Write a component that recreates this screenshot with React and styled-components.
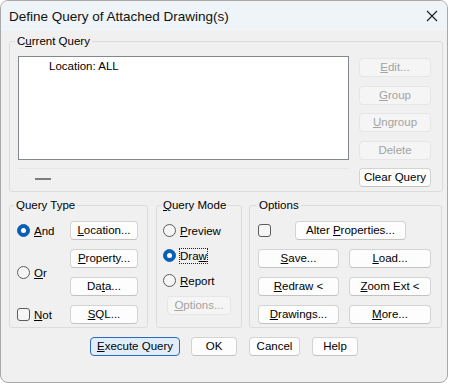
import React from 'react';
import styled, { createGlobalStyle } from 'styled-components';

const GlobalStyle = createGlobalStyle`
  html, body {
    margin: 0;
    padding: 0;
    background: #ffffff;
  }
  body {
    font-family: "Liberation Sans", Arial, sans-serif;
    font-size: 11.5px;
    color: #000;
  }
`;

const Window = styled.div`
  box-sizing: border-box;
  width: 448px;
  height: 383px;
  border: 1px solid #a9a9a9;
  border-radius: 8px;
  background: #f0f0f0;
  overflow: hidden;
  display: flex;
  flex-direction: column;
`;

const TitleBar = styled.div`
  height: 30px;
  flex: none;
  background: #eef4f7;
  display: flex;
  align-items: center;
  justify-content: space-between;
  padding: 0 9px 0 8px;
  font-size: 13.5px;
  color: #111;
`;

const CloseIcon = () => (
  <svg width="12" height="12" viewBox="0 0 12 12">
    <path d="M1 1 L11 11 M11 1 L1 11" stroke="#1b1b1b" strokeWidth="1.1" fill="none" />
  </svg>
);

const Body = styled.div`
  padding: 2px 5px 0 8px;
  display: flex;
  flex-direction: column;
`;

const Group = styled.fieldset`
  margin: 0;
  min-width: 0;
  box-sizing: border-box;
  border: 1px solid #dcdcdc;
  border-radius: 3px;
  width: ${(p) => p.$w}px;
  padding: ${(p) => p.$pad};
`;

const Legend = styled.legend`
  padding: 0 2px;
  margin-left: ${(p) => p.$ml || -3}px;
  line-height: 16px;
  font-size: 11.5px;
`;

const QueryRow = styled.div`
  display: flex;
  gap: 10px;
`;

const ListCol = styled.div`
  display: flex;
  flex-direction: column;
`;

const ListBox = styled.div`
  box-sizing: border-box;
  width: 331px;
  height: 104px;
  background: #fff;
  border: 1px solid #828790;
  padding: 2px 0 0 30px;
  line-height: 14px;
`;

const ScrollStrip = styled.div`
  box-sizing: border-box;
  height: 19px;
  margin-top: 8px;
  border-top: 1px solid #e6e6e6;
  padding: 9px 0 0 17px;
`;

const Dash = styled.div`
  width: 16px;
  height: 2px;
  background: #7d7d7d;
`;

const ButtonCol = styled.div`
  display: flex;
  flex-direction: column;
  gap: 8.5px;
  padding-top: 2px;
`;

const Btn = styled.button`
  box-sizing: border-box;
  width: ${(p) => p.$w}px;
  height: 19px;
  padding: 0;
  margin: 0;
  font-family: "Liberation Sans", Arial, sans-serif;
  font-size: 11.5px;
  line-height: 17px;
  color: #000;
  background: #fdfdfd;
  border: 1px solid #d3d3d3;
  border-bottom-color: #c2c2c2;
  border-radius: 4px;
  flex: none;
  margin-left: ${(p) => p.$ml || 0}px;
  grid-row: ${(p) => p.$row || 'auto'};
  grid-column: ${(p) => p.$col || 'auto'};

  &:disabled {
    color: #a3a3a3;
    background: #f5f5f5;
    border-color: #e6e6e6;
  }

  ${(p) => p.$default && `
    background: #e1eefa;
    border-color: #2a6ab8;
  `}
`;

const GroupsRow = styled.div`
  display: flex;
  margin-top: 5px;
`;

const TypeGrid = styled.div`
  display: grid;
  grid-template-columns: 1fr 68px;
  grid-template-rows: repeat(4, 19px);
  row-gap: 9px;
`;

const ModeCol = styled.div`
  display: flex;
  flex-direction: column;
  gap: 6px;
`;

const OptionLine = styled.div`
  height: ${(p) => (p.$tall ? 'auto' : '19px')};
  display: flex;
  align-items: center;
  grid-row: ${(p) => p.$row || 'auto'};
  grid-column: ${(p) => p.$col || 'auto'};
`;

const Circle = styled.span`
  box-sizing: border-box;
  width: 13px;
  height: 13px;
  border-radius: 50%;
  flex: none;
  margin-right: 4px;
  display: flex;
  align-items: center;
  justify-content: center;
  background: ${(p) => (p.$on ? '#0a5eb5' : '#f6f6f6')};
  border: 1px solid ${(p) => (p.$on ? '#0a5eb5' : '#5c5c5c')};

  &::after {
    content: '';
    display: ${(p) => (p.$on ? 'block' : 'none')};
    width: 5px;
    height: 5px;
    border-radius: 50%;
    background: #fff;
  }
`;

const Box = styled.span`
  box-sizing: border-box;
  width: 13px;
  height: 13px;
  border-radius: 3px;
  flex: none;
  margin-right: 4px;
  background: #f6f6f6;
  border: 1px solid #5c5c5c;
`;

const Label = styled.span`
  line-height: 14px;
  outline: ${(p) => (p.$focus ? '1px dotted #222' : 'none')};
`;

const OptGrid = styled.div`
  display: grid;
  grid-template-columns: 81px 82px;
  column-gap: 10px;
  row-gap: 9px;
  margin-top: 9px;
`;

const BottomBar = styled.div`
  display: flex;
  justify-content: center;
  margin-top: 9px;
  gap: 11px;
  padding-right: 3px;
`;

const Radio = ({ on, focus, children, row, col, tall }) => (
  <OptionLine $row={row} $col={col} $tall={tall}>
    <Circle $on={on} />
    <Label $focus={focus}>{children}</Label>
  </OptionLine>
);

export default function App() {
  return (
    <>
      <GlobalStyle />
      <Window>
        <TitleBar>
          <span>Define Query of Attached Drawing(s)</span>
          <CloseIcon />
        </TitleBar>
        <Body>
          <Group $w={434} $pad="7px 11px 4px 8px">
            <Legend>C<u>u</u>rrent Query</Legend>
            <QueryRow>
              <ListCol>
                <ListBox>Location: ALL</ListBox>
                <ScrollStrip>
                  <Dash />
                </ScrollStrip>
              </ListCol>
              <ButtonCol>
                <Btn $w={72} disabled><u>E</u>dit...</Btn>
                <Btn $w={72} disabled><u>G</u>roup</Btn>
                <Btn $w={72} disabled><u>U</u>ngroup</Btn>
                <Btn $w={72} disabled>Delete</Btn>
                <Btn $w={72}>Clear Query</Btn>
              </ButtonCol>
            </QueryRow>
          </Group>

          <GroupsRow>
            <Group $w={139} $pad="8px 9px 3px 7px">
              <Legend>Query Type</Legend>
              <TypeGrid>
                <Radio on row="1" col="1"><u>A</u>nd</Radio>
                <Btn $w={68} $row="1" $col="2"><u>L</u>ocation...</Btn>
                <Radio row="2 / 4" col="1" tall><u>O</u>r</Radio>
                <Btn $w={68} $row="2" $col="2"><u>P</u>roperty...</Btn>
                <Btn $w={68} $row="3" $col="2">Da<u>t</u>a...</Btn>
                <OptionLine $row="4" $col="1">
                  <Box />
                  <Label><u>N</u>ot</Label>
                </OptionLine>
                <Btn $w={68} $row="4" $col="2"><u>S</u>QL...</Btn>
              </TypeGrid>
            </Group>

            <Group $w={86} $pad="8px 6px 3px 6px" style={{ marginLeft: 8 }}>
              <Legend $ml={-2}><u>Q</u>uery Mode</Legend>
              <ModeCol>
                <Radio><u>P</u>review</Radio>
                <Radio on focus>Dra<u>w</u></Radio>
                <Radio><u>R</u>eport</Radio>
                <Btn $w={64} $ml={4} disabled><u>O</u>ptions...</Btn>
              </ModeCol>
            </Group>

            <Group $w={193} $pad="8px 9px 3px 8px" style={{ marginLeft: 7 }}>
              <Legend $ml={-1}>Options</Legend>
              <OptionLine>
                <Box />
                <Btn $w={111} $ml={20}>Alter <u>P</u>roperties...</Btn>
              </OptionLine>
              <OptGrid>
                <Btn $w={81}><u>S</u>ave...</Btn>
                <Btn $w={82}><u>L</u>oad...</Btn>
                <Btn $w={81}><u>R</u>edraw &lt;</Btn>
                <Btn $w={82}><u>Z</u>oom Ext &lt;</Btn>
                <Btn $w={81}><u>D</u>rawings...</Btn>
                <Btn $w={82}><u>M</u>ore...</Btn>
              </OptGrid>
            </Group>
          </GroupsRow>

          <BottomBar>
            <Btn $w={90} $default><u>E</u>xecute Query</Btn>
            <Btn $w={46}>OK</Btn>
            <Btn $w={51} $ml={1}>Cancel</Btn>
            <Btn $w={46} $ml={1}>Help</Btn>
          </BottomBar>
        </Body>
      </Window>
    </>
  );
}
